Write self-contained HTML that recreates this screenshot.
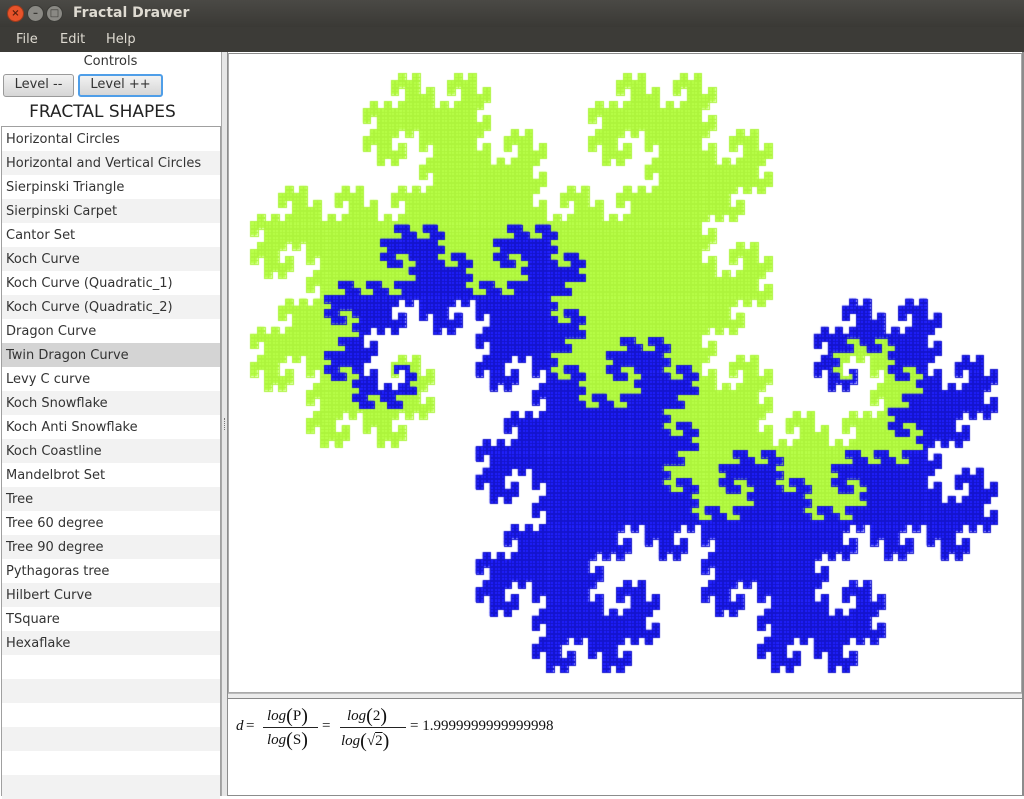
<!DOCTYPE html>
<html><head><meta charset="utf-8">
<style>
*{margin:0;padding:0;box-sizing:border-box}
body{width:1024px;height:796px;overflow:hidden;background:#fff;font-family:"DejaVu Sans","Liberation Sans",sans-serif;position:relative}
#title{position:absolute;left:0;top:0;width:1024px;height:27px;background:linear-gradient(#4a4945,#3a3935);color:#dfdbd2;font-weight:bold;font-size:14px}
#title .t{position:absolute;left:73px;top:5px}
.wb{position:absolute;top:5px;width:17px;height:17px;border-radius:50%;background:#8a8984;border:1px solid #3a3a36;font-size:10px;color:#3a3935;text-align:center;line-height:15px}
#menu{position:absolute;left:0;top:27px;width:1024px;height:25px;background:#3c3b37;color:#dfdbd2;font-size:13px}
#menu span{position:absolute;top:5px}
.btn{position:absolute;top:74px;height:23px;border:1px solid #9a9a9a;border-radius:3px;background:linear-gradient(#f2f2f2,#d6d6d6);font-size:13px;color:#333;text-align:center;line-height:20px}
#list{position:absolute;left:1px;top:126px;width:220px;height:670px;border:1px solid #a0a0a0;border-bottom:none}
.row{height:24px;font-size:13px;color:#333;padding-left:4px;line-height:25px;white-space:nowrap}
.row:nth-child(even){background:#f2f2f2}
.row.sel{background:#d4d4d4}
#vs{position:absolute;left:221px;top:52px;width:7px;height:744px;background:#e6e6e6;border-left:1px solid #a8a8a8;border-right:1px solid #8c8c8c}
#canvasBox{position:absolute;left:228px;top:53px;width:794px;height:640px;border:1px solid #aaa;border-top:1px solid #8c8c8c;background:#fff}
#hs{position:absolute;left:228px;top:693px;width:794px;height:6px;background:#ececec;border-top:1px solid #bbb;border-bottom:1px solid #888}
#rb{position:absolute;left:1022px;top:52px;width:2px;height:744px;background:#8c8c8c}
#bot{position:absolute;left:228px;top:795px;width:796px;height:1px;background:#8c8c8c}
#f{position:absolute;font-family:"Liberation Serif",serif;font-size:15px;color:#111}
#f span{position:absolute;white-space:nowrap}
.p{font-size:20px;vertical-align:-2px}
</style></head><body>
<div id="title">
 <div class="wb" style="left:7px;background:#e8532a;border-color:#9c3a1c;color:#5a1f0c">×</div>
 <div class="wb" style="left:27px">–</div>
 <div class="wb" style="left:46px">□</div>
 <span class="t">Fractal Drawer</span>
</div>
<div id="menu"><span style="left:16px">File</span><span style="left:60px">Edit</span><span style="left:106px">Help</span></div>
<div style="position:absolute;left:0;top:54px;width:221px;text-align:center;font-size:13px;color:#333">Controls</div>
<div class="btn" style="left:3px;width:71px">Level --</div>
<div class="btn" style="left:78px;width:85px;border:2px solid #4f9ee8;line-height:18px">Level ++</div>
<div style="position:absolute;left:0;top:102px;width:205px;text-align:center;font-size:17px;color:#222">FRACTAL SHAPES</div>
<div id="list">
<div class="row">Horizontal Circles</div>
<div class="row">Horizontal and Vertical Circles</div>
<div class="row">Sierpinski Triangle</div>
<div class="row">Sierpinski Carpet</div>
<div class="row">Cantor Set</div>
<div class="row">Koch Curve</div>
<div class="row">Koch Curve (Quadratic_1)</div>
<div class="row">Koch Curve (Quadratic_2)</div>
<div class="row">Dragon Curve</div>
<div class="row sel">Twin Dragon Curve</div>
<div class="row">Levy C curve</div>
<div class="row">Koch Snowflake</div>
<div class="row">Koch Anti Snowflake</div>
<div class="row">Koch Coastline</div>
<div class="row">Mandelbrot Set</div>
<div class="row">Tree</div>
<div class="row">Tree 60 degree</div>
<div class="row">Tree 90 degree</div>
<div class="row">Pythagoras tree</div>
<div class="row">Hilbert Curve</div>
<div class="row">TSquare</div>
<div class="row">Hexaflake</div>
<div class="row"></div><div class="row"></div><div class="row"></div><div class="row"></div><div class="row"></div><div class="row"></div>
</div>
<div id="vs"><div style="position:absolute;left:2px;top:366px;width:1px;height:12px;border-left:1px dotted #777"></div></div>
<div id="canvasBox"><canvas id="c" width="792" height="638"></canvas></div>
<div id="hs"></div>
<div id="rb"></div><div id="bot"></div>
<div id="f">
 <span style="left:236px;top:718px;font-style:italic">d</span>
 <span style="left:246px;top:718px">=</span>
 <span style="left:267px;top:705px"><i>log</i><span class="p" style="position:static">(</span>P<span class="p" style="position:static">)</span></span>
 <div style="position:absolute;left:263px;top:727px;width:55px;height:1px;background:#222"></div>
 <span style="left:267px;top:729px"><i>log</i><span class="p" style="position:static">(</span>S<span class="p" style="position:static">)</span></span>
 <span style="left:322px;top:718px">=</span>
 <span style="left:347px;top:705px"><i>log</i><span class="p" style="position:static">(</span>2<span class="p" style="position:static">)</span></span>
 <div style="position:absolute;left:340px;top:727px;width:66px;height:1px;background:#222"></div>
 <span style="left:341px;top:730px"><i>log</i><span class="p" style="position:static">(</span>√<span style="position:static;text-decoration:overline">2</span><span class="p" style="position:static">)</span></span>
 <span style="left:410px;top:718px">= 1.9999999999999998</span>
</div>
<script>
(function(){
function turnL(i){return (((i&-i)<<1)&i)!==0;}
function cellsVertex(n){var dx=[1,0,-1,0],dy=[0,1,0,-1],N=1<<n,x=0,y=0,d=0,cs=[[0,0]];
 for(var i=1;i<=N;i++){x+=dx[d];y+=dy[d];cs.push([x,y]);if(i<N)d=(d+(turnL(i)?1:3))%4;}return cs;}
function cellsDiag(n){var DX=[1,-1,-1,1],DY=[1,1,-1,-1],N=1<<n,x=0,y=0,d=0,cs=[];
 for(var i=1;i<=N;i++){cs.push([x+(DX[d]-1)/2,y+(DY[d]-1)/2]);x+=DX[d];y+=DY[d];if(i<N)d=(d+(turnL(i)?1:3))%4;}return cs;}
function tf(p,r,m){var x=p[0]+0.5,y=p[1]+0.5;if(m)x=-x;for(var k=0;k<r;k++){var t=x;x=-y;y=t;}return [x-0.5,y-0.5];}
function bb(P){var a=[1e9,1e9,-1e9,-1e9];for(var i=0;i<P.length;i++){var p=P[i];if(p[0]<a[0])a[0]=p[0];if(p[1]<a[1])a[1]=p[1];if(p[0]>a[2])a[2]=p[0];if(p[1]>a[3])a[3]=p[1];}return a;}
var GW=680,GH=437,S=1400,OFF=700,grid=new Uint8Array(S*S);
var variants=[cellsVertex(12),cellsDiag(13)];
var best=null;
variants.forEach(function(V){
 for(var r=0;r<4;r++)for(var m=0;m<2;m++){
  var A=V.map(function(p){return tf(p,r,m)});var g=bb(A);
  var gw=g[2]-g[0]+1,gh=g[3]-g[1]+1;var sc=(GW/gw+GH/gh)/2;
  var base=Math.pow(gw/gh-GW/GH,2)+0.03*Math.pow(sc-6.5,2);
  if(best&&base>best.e)continue;
  A.forEach(function(p){grid[(p[1]+OFF)*S+p[0]+OFF]=1;});
  var tx0=Math.round(g[0]+75/sc+g[2]),ty0=Math.round(g[1]+149/sc+g[3]);
  for(var ddx=-6;ddx<=6;ddx++)for(var ddy=-6;ddy<=6;ddy++){
   var tx=tx0+ddx,ty=ty0+ddy,ov=0;
   for(var i=0;i<A.length;i++){var bx=tx-A[i][0],by=ty-A[i][1];if(grid[(by+OFF)*S+bx+OFF])ov++;}
   var e=base+3*ov/A.length+0.002*(ddx*ddx+ddy*ddy);
   if(!best||e<best.e)best={e:e,A:A,tx:tx,ty:ty};
  }
  A.forEach(function(p){grid[(p[1]+OFF)*S+p[0]+OFF]=0;});
 }
});
var A=best.A,B=A.map(function(p){return [best.tx-p[0],best.ty-p[1]]});
var g=bb(A),b=bb(B),T=[Math.min(g[0],b[0]),Math.min(g[1],b[1]),Math.max(g[2],b[2]),Math.max(g[3],b[3])];
var W=T[2]-T[0]+1,H=T[3]-T[1]+1;
var sc=Math.min(748/W,599/H);
var ox=250-229-T[0]*sc,oy=73-54-T[1]*sc;
var c=document.getElementById('c').getContext('2d');
function draw(P,f,st){c.fillStyle=f;P.forEach(function(p){c.fillRect(ox+p[0]*sc,oy+p[1]*sc,sc+0.4,sc+0.4);});
 c.strokeStyle=st;c.lineWidth=1;P.forEach(function(p){c.strokeRect(Math.round(ox+p[0]*sc)+0.5,Math.round(oy+p[1]*sc)+0.5,Math.round(sc),Math.round(sc));});}
draw(A,'#b8ff48','#adf43c');
draw(B,'#2020ff','#1414cc');
})();
</script>
</body></html>
